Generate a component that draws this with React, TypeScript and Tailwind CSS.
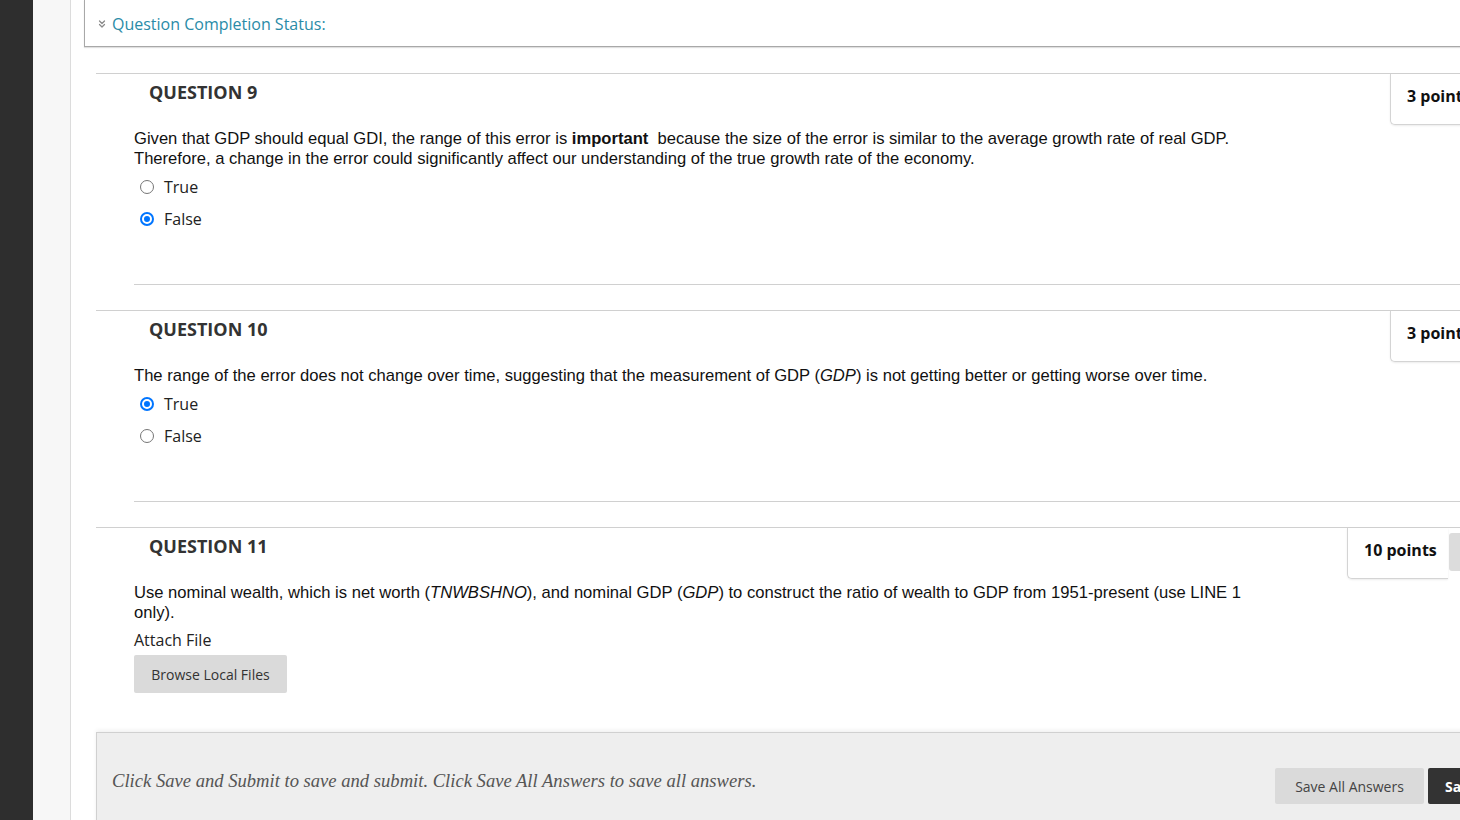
import { ChevronsDown } from "lucide-react";
import type { ReactNode } from "react";

type Question = {
  num: number;
  points: string;
  pointsWidth: string;
  text: ReactNode;
  options?: { label: string; checked: boolean }[];
  attach?: boolean;
};

const questions: Question[] = [
  {
    num: 9,
    points: "3 points",
    pointsWidth: "w-[92px]",
    text: (
      <>
        Given that GDP should equal GDI, the range of this error is <b>important</b>
        {"\u00a0 "}because the size of the error is similar to the average growth rate of real GDP. Therefore, a change in
        the error could significantly affect our understanding of the true growth rate of the economy.
      </>
    ),
    options: [
      { label: "True", checked: false },
      { label: "False", checked: true },
    ],
  },
  {
    num: 10,
    points: "3 points",
    pointsWidth: "w-[92px]",
    text: (
      <>
        The range of the error does not change over time, suggesting that the measurement of GDP (<i>GDP</i>) is not
        getting better or getting worse over time.
      </>
    ),
    options: [
      { label: "True", checked: true },
      { label: "False", checked: false },
    ],
  },
  {
    num: 11,
    points: "10 points",
    pointsWidth: "w-[101px]",
    text: (
      <>
        Use nominal wealth, which is net worth (<i>TNWBSHNO</i>), and nominal GDP (<i>GDP</i>) to construct the ratio of
        wealth to GDP from 1951-present (use LINE 1 only).
      </>
    ),
    attach: true,
  },
];

const Radio = ({ checked }: { checked: boolean }) =>
  checked ? (
    <span className="flex h-[14px] w-[14px] items-center justify-center rounded-full bg-[#0075ff]">
      <span className="h-[10px] w-[10px] rounded-full border-2 border-white bg-[#0075ff]" />
    </span>
  ) : (
    <span className="h-[14px] w-[14px] rounded-full border border-[#767676] bg-white" />
  );

const QuestionBlock = ({ q }: { q: Question }) => (
  <div className="border-t border-[#d0d0d0]">
    <div className="flex items-start">
      <h3 className="flex-1 pl-[53px] pt-[6px] text-[18px] font-bold leading-[24px] text-[#333]">
        QUESTION {q.num}
      </h3>
      <div className="flex shrink-0 items-start">
        <div
          className={`h-[51px] rounded-bl-[5px] border-b border-l border-[#d4d4d4] bg-white pl-4 pt-[10px] text-[16px] font-bold leading-[24px] text-[#111] shadow-[0_1px_2px_rgba(0,0,0,0.08)] ${q.pointsWidth}`}
        >
          {q.points}
        </div>
        <div className={`ml-px mt-[5px] h-[38px] rounded-[3px] bg-[#dcdcdc] ${q.attach ? "w-[151px]" : "w-[117px]"}`} />
      </div>
    </div>
    <div className="pl-[38px]">
      <p className="mt-[4px] w-[1130px] font-['Liberation_Sans',Arial,sans-serif] text-[16.6px] leading-[20px] text-[#111]">
        {q.text}
      </p>
      {q.options && (
        <div className="mt-[2px]">
          {q.options.map((o) => (
            <label key={o.label} className="flex h-[32px] items-center pl-[6px] text-[16px] text-[#222]">
              <Radio checked={o.checked} />
              <span className="ml-[10px]">{o.label}</span>
            </label>
          ))}
        </div>
      )}
      {q.attach && (
        <div className="mt-[5px]">
          <div className="text-[16px] leading-[24px] text-[#222]">Attach File</div>
          <button className="mt-[3px] h-[38px] w-[153px] rounded-[2px] bg-[#dadada] text-[14px] text-[#333]">
            Browse Local Files
          </button>
        </div>
      )}
      {q.options && <div className="mt-[49px] border-t border-[#d0d0d0]" />}
      {q.options && <div className="h-[25px]" />}
    </div>
  </div>
);

export default function App() {
  return (
    <div className="flex h-[820px] w-[1460px] overflow-hidden bg-white font-['Open_Sans',sans-serif]">
      <div className="w-[33px] shrink-0 bg-[#2e2e2e]" />
      <div className="w-[38px] shrink-0 border-r border-[#dcdcdc] bg-[#f7f7f7]" />
      <div className="w-[1529px] shrink-0 pl-[13px]">
        <div className="flex h-[47px] items-center border-b border-l border-[#a8a8a8] pl-[11px] pt-[2px] shadow-[0_1px_1px_rgba(0,0,0,0.12)]">
          <ChevronsDown size={12} strokeWidth={2.5} className="text-[#8a8a8a]" />
          <span className="ml-[4px] text-[16px] text-[#2a8ba7]">Question Completion Status:</span>
        </div>
        <div className="ml-[12px] mt-[26px]">
          {questions.map((q) => (
            <QuestionBlock key={q.num} q={q} />
          ))}
          <div className="mt-[39px] flex h-[120px] items-start border-l border-t border-[#d0d0d0] bg-[#eeeeee] pl-[15px] pr-[22px] pt-[35px] shadow-[0_-2px_4px_rgba(0,0,0,0.06)]">
            <p className="mt-px font-['Liberation_Serif',Georgia,serif] text-[18.6px] italic leading-[24px] text-[#555]">
              Click Save and Submit to save and submit. Click Save All Answers to save all answers.
            </p>
            <div className="ml-auto flex gap-[4px]">
              <button className="h-[36px] w-[149px] rounded-[2px] bg-[#dadada] text-[14px] text-[#444]">
                Save All Answers
              </button>
              <button className="h-[36px] w-[150px] rounded-[2px] bg-[#333] text-[14px] font-bold text-white">
                Save and Submit
              </button>
            </div>
          </div>
        </div>
      </div>
    </div>
  );
}
